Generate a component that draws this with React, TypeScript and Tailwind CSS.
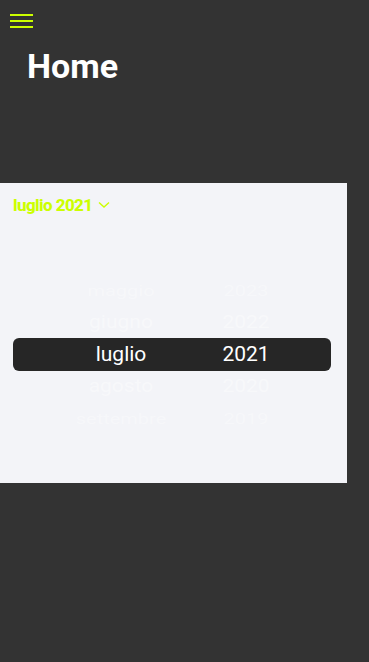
const MONTHS = ["maggio", "giugno", "luglio", "agosto", "settembre"];
const YEARS = ["2023", "2022", "2021", "2020", "2019"];

// offset from the selected row: -2..2
const ROW_STYLE: Record<number, string> = {
  [-2]: "opacity-30 scale-y-[0.7] text-[20px]",
  [-1]: "opacity-40 scale-y-[0.9] text-[21px]",
  [0]: "text-[21px]",
  [1]: "opacity-40 scale-y-[0.9] text-[21px]",
  [2]: "opacity-30 scale-y-[0.75] text-[20px]",
};

function Hamburger() {
  return (
    <svg width="24" height="16" viewBox="0 0 24 16" className="block">
      <rect x="0" y="1" width="23" height="2" fill="#ccff00" />
      <rect x="0" y="7" width="23" height="2" fill="#ccff00" />
      <rect x="0" y="13" width="23" height="2" fill="#ccff00" />
    </svg>
  );
}

function Chevron() {
  return (
    <svg width="12" height="8" viewBox="0 0 12 8" className="block">
      <path d="M1 1.5 L6 6 L11 1.5" fill="none" stroke="#ccff00" strokeWidth="1.4" />
    </svg>
  );
}

function Wheel() {
  return (
    <div className="relative h-[160px] mt-[60px]">
      <div className="absolute left-[13px] right-[16px] top-[63px] h-[33px] rounded-md bg-[#262626]" />
      <div className="relative flex flex-col">
        {MONTHS.map((m, i) => {
          const off = i - 2;
          return (
            <div key={m} className="flex h-[32px] items-center pl-[46px] text-white">
              <span className={`w-[150px] text-center ${ROW_STYLE[off]}`}>{m}</span>
              <span className={`w-[100px] text-center ${ROW_STYLE[off]}`}>{YEARS[i]}</span>
            </div>
          );
        })}
      </div>
    </div>
  );
}

export default function App() {
  return (
    <div className="min-h-[662px] w-[369px] bg-[#333333] font-['Roboto','Liberation_Sans',sans-serif]">
      <div className="pl-[10px] pt-[13px]">
        <Hamburger />
      </div>
      <h1 className="pl-[27px] pt-[17px] text-[34px] font-bold leading-[40px] text-white">
        Home
      </h1>
      <div className="mt-[97px] h-[300px] w-[347px] bg-[#f3f4f8]">
        <div className="flex items-center gap-[5px] pl-[13px] pt-[12px]">
          <span className="text-[17px] font-extrabold leading-[20px] tracking-[-0.6px] text-[#ccff00]">
            luglio 2021
          </span>
          <Chevron />
        </div>
        <Wheel />
      </div>
    </div>
  );
}
